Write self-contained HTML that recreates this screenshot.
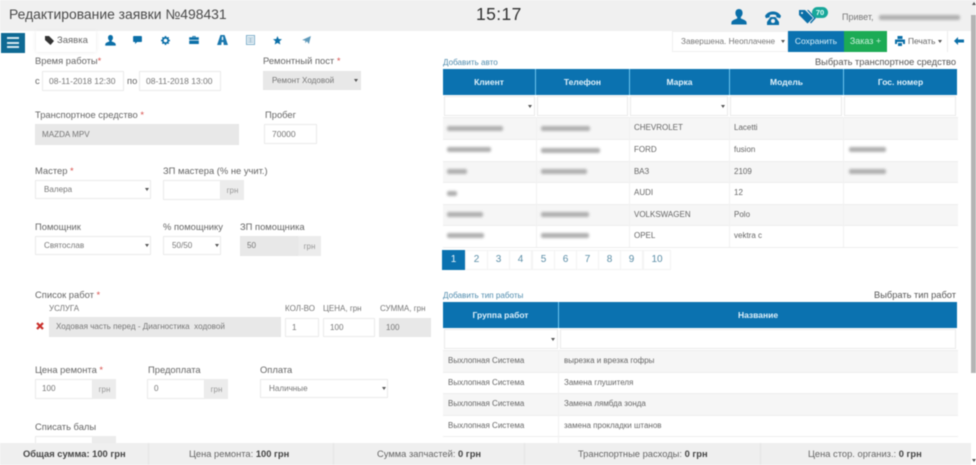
<!DOCTYPE html>
<html lang="ru"><head><meta charset="utf-8"><title>Заявка</title>
<style>
html,body{margin:0;padding:0;background:#fff;width:976px;height:465px;overflow:hidden}
#p{position:relative;width:976px;height:465px;overflow:hidden;font-family:"Liberation Sans",sans-serif;color:#666;filter:blur(.5px);background:#fff}
#p div,#p span.a,#p svg{position:absolute;box-sizing:border-box}
.l{font-size:9.4px;line-height:12px;white-space:nowrap;color:#666}
.l b{color:#d9534f;font-weight:normal}
.s{font-size:8px;line-height:10px;white-space:nowrap;color:#777}
.i{background:#fff;border:1px solid #eaeaea;font-size:8.1px;color:#777;padding-left:6px;white-space:nowrap;overflow:hidden}
.g{background:#e8e8e8;border-color:#e6e6e6}
.ad{background:#ececec;border:1px solid #ececec;font-size:8px;color:#999;text-align:center}
.ar{width:0;height:0;border-left:2px solid transparent;border-right:2px solid transparent;border-top:3px solid #555}
.th{background:#0b72b0;color:#dff0fa;font-weight:bold;font-size:8.5px;text-align:center;border-right:1px solid #6cc4ee}
.c{font-size:8px;color:#666;white-space:nowrap;line-height:22px;height:22px}
.z{background:#f6f6f6;left:443px;width:515px;height:22px}
.w{left:443px;width:515px;height:1px;background:#eeeeee}
.v{width:1px;background:#f1f1f1}
.r{background:#b0b0b0;height:5px;filter:blur(1.4px);border-radius:2px}
.f{top:443px;height:22px;line-height:22px;font-size:9.35px;color:#666;white-space:nowrap}
.f b{color:#444}
.pg{top:250px;width:23px;height:20px;line-height:18px;text-align:center;font-size:10px;color:#5d8fa8;border:1px solid #f3f3f3;background:#fff}
</style></head><body><div id="p">

<div style="left:0;top:0;width:976px;height:31px;background:#f0f0f0"></div>
<div style="left:9px;top:4px;font-size:13.9px;line-height:20px;color:#4a4a4a;white-space:nowrap">Редактирование заявки №498431</div>
<div style="left:476px;top:3px;font-size:17.5px;line-height:22px;color:#333;letter-spacing:.4px">15:17</div>

<svg style="left:731px;top:9px" width="16" height="16" viewBox="0 0 16 16"><path fill="#0b6fa8" d="M8 0c2.300 0 3.600 1.800 3.600 4 0 1.700-.8 3.200-1.800 4v1.500c2 .7 5.200 1.800 5.700 3.500l.2 2.500H.3l.2-2.500c.5-1.700 3.700-2.800 5.700-3.500V8c-1-.8-1.800-2.300-1.800-4C4.400 1.800 5.700 0 8 0z"/></svg>
<svg style="left:765px;top:11px" width="16" height="14" viewBox="0 0 16 14"><path fill="#0b6fa8" d="M0 5C2 1.500 5 .5 8 .5s6 1 8 4.500l-1 2.300-3.500-1-.5-2.300c-1.800-.6-4.200-.6-6 0l-.5 2.300-3.500 1zM5.500 6h5L14 11v3H2v-3zM8 8a2 2 0 100 4 2 2 0 000-4z"/></svg>
<svg style="left:799px;top:9px" width="18" height="16" viewBox="0 0 18 16"><path fill="#0b6fa8" d="M0 1h6l8 8-5.500 5.500L0 6zM3 3a1 1 0 100 2 1 1 0 000-2z"/><path fill="#0b6fa8" d="M8 1h1.500l7.500 8-5 5.500-1-1 4-4.500z"/></svg>
<div style="left:812px;top:7px;width:16px;height:11px;border-radius:6px;background:#17a79a;color:#e6fff8;font-size:7.500px;line-height:11px;text-align:center;font-weight:bold">70</div>
<div style="left:842px;top:11px;font-size:9px;line-height:12px;color:#777">Привет,</div>
<div class="r" style="left:879px;top:15px;width:81px;height:5px"></div>

<div style="left:971px;top:15px;width:5px;height:358px;background:#b4b4b4"></div>
<div style="left:972px;top:2px;width:0;height:0;border-left:2px solid transparent;border-right:2px solid transparent;border-bottom:3px solid #555"></div>
<div style="left:972px;top:459px;width:0;height:0;border-left:2px solid transparent;border-right:2px solid transparent;border-top:3px solid #555"></div>

<div style="left:1px;top:33px;width:24px;height:20px;background:#0f6a94"></div>
<div style="left:7px;top:37px;width:12px;height:2px;background:#d5e8f0"></div>
<div style="left:7px;top:41.500px;width:12px;height:2px;background:#d5e8f0"></div>
<div style="left:7px;top:46px;width:12px;height:2px;background:#d5e8f0"></div>

<div style="left:36px;top:31px;width:60px;height:21px;background:#fff;box-shadow:0 0 4px #e8e8e8"></div>
<svg style="left:45px;top:36px" width="9" height="9" viewBox="0 0 9 9"><path fill="#333" d="M0 0h4l5 5-3.500 4L0 4z"/></svg>
<div style="left:57px;top:35px;font-size:9.500px;line-height:12px;color:#666">Заявка</div>
<svg style="left:105px;top:35px" width="11" height="11" viewBox="0 0 16 16"><path fill="#0b6fa8" d="M8 0c2.300 0 3.600 1.800 3.600 4 0 1.700-.8 3.200-1.800 4v1.500c2 .7 5.200 1.800 5.700 3.500l.2 2.500H.3l.2-2.500c.5-1.700 3.700-2.800 5.700-3.500V8c-1-.8-1.800-2.300-1.800-4C4.400 1.800 5.700 0 8 0z"/></svg>
<svg style="left:133px;top:36px" width="9" height="8" viewBox="0 0 11 10"><path fill="#0b6fa8" d="M1 0h9a1 1 0 011 1v5.500a1 1 0 01-1 1H5L2.500 10V7.500H1a1 1 0 01-1-1V1a1 1 0 011-1z"/></svg>
<svg style="left:161px;top:36px" width="9" height="9" viewBox="0 0 12 12"><circle cx="6" cy="6" r="3.600" fill="none" stroke="#0b6fa8" stroke-width="2.400"/><path stroke="#0b6fa8" stroke-width="2" d="M6 0v2M6 10v2M0 6h2M10 6h2M1.800 1.800l1.400 1.400M8.800 8.800l1.400 1.400M10.200 1.800L8.800 3.200M3.200 8.800l-1.400 1.400"/></svg>
<svg style="left:189px;top:36px" width="10" height="8" viewBox="0 0 12 10"><path fill="#0b6fa8" d="M4 0h4v1.500h4v3.300H0V1.500h4zM5 1v.5h2V1zM0 5.800h12V10H0z"/></svg>
<svg style="left:217px;top:35px" width="11" height="10" viewBox="0 0 13 12"><path fill="#1a78ae" d="M4 0h5l4 12H8l-.4-3.500H5.400L5 12H0zM5.800 2l-.2 4h1.800l-.2-4z"/></svg>
<svg style="left:246px;top:35px" width="9" height="10" viewBox="0 0 11 12"><rect x=".5" y=".5" width="10" height="11" fill="#eef5f9" stroke="#6fa5c4"/><path stroke="#9abcd0" d="M2 3.500h7M2 6h7M2 8.500h7M5.500 3.500v6"/></svg>
<svg style="left:273px;top:36px" width="9" height="9" viewBox="0 0 10 10"><path fill="#0b6fa8" d="M5 0l1.400 3.300 3.600.3-2.700 2.300.8 3.600L5 7.600 1.900 9.500l.8-3.600L0 3.600l3.600-.3z"/></svg>
<svg style="left:302px;top:36px" width="9" height="8" viewBox="0 0 11 10"><path fill="#5f9abb" d="M11 0L8.500 10 6 6.500 4 9V6L0 5z"/></svg>

<div class="i" style="left:672px;top:31px;width:116px;height:21px;line-height:20px;border-color:#f0f0f0;padding-left:8px;font-size:8.200px">Завершена. Неоплачене</div>
<div style="left:775px;top:33px;width:11px;height:17px;background:#fff"></div>
<div class="ar" style="left:781px;top:40px"></div>
<div style="left:788px;top:31px;width:56px;height:21px;background:#0b72b0;color:#d8eefa;font-size:8.500px;line-height:21px;text-align:center">Сохранить</div>
<div style="left:844px;top:31px;width:43px;height:21px;background:#1cab55;color:#c8f0d8;font-size:9px;line-height:21px;text-align:center">Заказ +</div>
<div style="left:887px;top:31px;width:61px;height:21px;background:#fff;border-right:1px solid #ececec"></div>
<svg style="left:895px;top:36px" width="10" height="10" viewBox="0 0 10 10"><path fill="#0b6fa8" d="M2.500 0h5v3h-5zM0 3.500h10V8H8V6H2v2H0zM3 7h4v3H3z"/></svg>
<div style="left:908px;top:35px;font-size:8.400px;line-height:12px;color:#666;white-space:nowrap">Печать</div>
<div class="ar" style="left:938px;top:40px"></div>
<svg style="left:954px;top:37px" width="10" height="8" viewBox="0 0 10 8"><path fill="#0b6fa8" d="M0 4l4-4v2.500h6v3H4V8z"/></svg>

<div class="l" style="left:35px;top:55px">Время работы<b>*</b></div>
<div class="l" style="left:35px;top:75px">с</div>
<div class="i" style="left:42px;top:71px;width:82px;height:20px;line-height:18px;font-size:8.500px">08-11-2018 12:30</div>
<div class="l" style="left:127px;top:75px">по</div>
<div class="i" style="left:139px;top:71px;width:82px;height:20px;line-height:18px;font-size:8.500px">08-11-2018 13:00</div>
<div class="l" style="left:263px;top:55px">Ремонтный пост <b>*</b></div>
<div class="i g" style="left:263px;top:71px;width:98px;height:19px;line-height:17px;padding-left:8px">Ремонт Ходовой</div>
<div class="ar" style="left:354px;top:79px"></div>

<div class="l" style="left:35px;top:109px">Транспортное средство <b>*</b></div>
<div class="i g" style="left:35px;top:124px;width:204px;height:21px;line-height:19px">MAZDA MPV</div>
<div class="l" style="left:265px;top:109px">Пробег</div>
<div class="i" style="left:264px;top:124px;width:53px;height:20px;line-height:18px;padding-left:7px;font-size:8.500px">70000</div>

<div class="l" style="left:35px;top:165px">Мастер <b>*</b></div>
<div class="i" style="left:35px;top:180px;width:116px;height:19px;line-height:17px;padding-left:8px">Валера</div>
<div class="ar" style="left:145px;top:188px"></div>
<div class="l" style="left:163px;top:165px">ЗП мастера (% не учит.)</div>
<div class="i" style="left:163px;top:180px;width:58px;height:20px"></div>
<div class="ad" style="left:221px;top:180px;width:23px;height:20px;line-height:19px">грн</div>

<div class="l" style="left:35px;top:221px">Помощник</div>
<div class="i" style="left:35px;top:236px;width:116px;height:19px;line-height:17px;padding-left:8px">Святослав</div>
<div class="ar" style="left:145px;top:244px"></div>
<div class="l" style="left:163px;top:221px">% помощнику</div>
<div class="i" style="left:163px;top:236px;width:58px;height:19px;line-height:17px;padding-left:8px">50/50</div>
<div class="ar" style="left:215px;top:244px"></div>
<div class="l" style="left:240px;top:221px">ЗП помощника</div>
<div class="i g" style="left:240px;top:236px;width:58px;height:20px;line-height:18px">50</div>
<div class="ad" style="left:298px;top:236px;width:23px;height:20px;line-height:19px">грн</div>

<div class="l" style="left:35px;top:289px">Список работ <b>*</b></div>
<div class="s" style="left:49px;top:304px">УСЛУГА</div>
<div class="s" style="left:285px;top:304px">КОЛ-ВО</div>
<div class="s" style="left:323px;top:304px">ЦЕНА, грн</div>
<div class="s" style="left:380px;top:304px">СУММА, грн</div>
<svg style="left:36px;top:322px" width="8" height="8" viewBox="0 0 8 8"><path stroke="#c9302c" stroke-width="2.200" d="M1 1l6 6M7 1L1 7"/></svg>
<div class="i g" style="left:49px;top:317px;width:232px;height:20px;line-height:18px">Ходовая часть перед - Диагностика&nbsp; ходовой</div>
<div class="i" style="left:285px;top:318px;width:34px;height:19px;line-height:17px">1</div>
<div class="i" style="left:323px;top:318px;width:52px;height:19px;line-height:17px">100</div>
<div class="i g" style="left:379px;top:318px;width:52px;height:19px;line-height:17px">100</div>

<div class="l" style="left:35px;top:364px">Цена ремонта <b>*</b></div>
<div class="i" style="left:35px;top:379px;width:58px;height:20px;line-height:18px">100</div>
<div class="ad" style="left:93px;top:379px;width:23px;height:20px;line-height:19px">грн</div>
<div class="l" style="left:148px;top:364px">Предоплата</div>
<div class="i" style="left:147px;top:379px;width:58px;height:20px;line-height:18px">0</div>
<div class="ad" style="left:205px;top:379px;width:23px;height:20px;line-height:19px">грн</div>
<div class="l" style="left:260px;top:364px">Оплата</div>
<div class="i" style="left:260px;top:379px;width:128px;height:19px;line-height:17px;padding-left:8px">Наличные</div>
<div class="ar" style="left:382px;top:387px"></div>
<div class="l" style="left:35px;top:421px">Списать балы</div>
<div class="i" style="left:35px;top:436px;width:58px;height:12px"></div>
<div class="ad" style="left:93px;top:436px;width:23px;height:12px"></div>

<!-- table 1 -->
<div style="left:443px;top:57px;font-size:8.100px;line-height:11px;color:#4f8bad;white-space:nowrap">Добавить авто</div>
<div style="right:20px;top:56px;font-size:9.300px;line-height:12px;color:#555;white-space:nowrap">Выбрать транспортное средство</div>
<div class="th" style="left:443px;top:69px;width:93px;height:26px;line-height:26px">Клиент</div>
<div class="th" style="left:536px;top:69px;width:94px;height:26px;line-height:26px">Телефон</div>
<div class="th" style="left:630px;top:69px;width:100px;height:26px;line-height:26px">Марка</div>
<div class="th" style="left:730px;top:69px;width:114px;height:26px;line-height:26px">Модель</div>
<div class="th" style="left:844px;top:69px;width:113px;height:26px;line-height:26px;border:0">Гос. номер</div>
<div class="i" style="left:444px;top:96px;width:91px;height:20px"></div><div class="ar" style="left:528px;top:105px"></div>
<div class="i" style="left:537px;top:96px;width:91px;height:20px"></div>
<div class="i" style="left:630px;top:96px;width:98px;height:20px"></div><div class="ar" style="left:721px;top:105px"></div>
<div class="i" style="left:730px;top:96px;width:112px;height:20px"></div>
<div class="i" style="left:844px;top:96px;width:112px;height:20px"></div>

<div class="z" style="top:117px"></div><div class="z" style="top:161px;height:21px"></div><div class="z" style="top:204px;height:21px"></div>
<div class="w" style="top:117px"></div><div class="w" style="top:139px"></div><div class="w" style="top:161px"></div><div class="w" style="top:182px"></div><div class="w" style="top:204px"></div><div class="w" style="top:225px"></div><div class="w" style="top:247px"></div>
<div class="v" style="left:536px;top:117px;height:130px"></div><div class="v" style="left:629px;top:117px;height:130px"></div><div class="v" style="left:729px;top:117px;height:130px"></div><div class="v" style="left:843px;top:117px;height:130px"></div>

<div class="c" style="left:634px;top:117px">CHEVROLET</div><div class="c" style="left:734px;top:117px">Lacetti</div>
<div class="c" style="left:634px;top:139px">FORD</div><div class="c" style="left:734px;top:139px">fusion</div>
<div class="c" style="left:634px;top:161px">ВАЗ</div><div class="c" style="left:734px;top:161px">2109</div>
<div class="c" style="left:634px;top:182px">AUDI</div><div class="c" style="left:734px;top:182px">12</div>
<div class="c" style="left:634px;top:204px">VOLKSWAGEN</div><div class="c" style="left:734px;top:204px">Polo</div>
<div class="c" style="left:634px;top:225px">OPEL</div><div class="c" style="left:734px;top:225px">vektra c</div>

<div class="r" style="left:447px;top:126px;width:56px"></div><div class="r" style="left:541px;top:126px;width:49px"></div>
<div class="r" style="left:447px;top:147px;width:44px"></div><div class="r" style="left:541px;top:148px;width:59px"></div><div class="r" style="left:849px;top:147px;width:37px"></div>
<div class="r" style="left:447px;top:169px;width:20px"></div><div class="r" style="left:541px;top:169px;width:46px"></div><div class="r" style="left:849px;top:169px;width:37px"></div>
<div class="r" style="left:447px;top:191px;width:10px"></div>
<div class="r" style="left:447px;top:212px;width:36px"></div><div class="r" style="left:541px;top:212px;width:48px"></div>
<div class="r" style="left:447px;top:233px;width:37px"></div><div class="r" style="left:541px;top:233px;width:48px"></div>

<div class="pg" style="left:442px;background:#0b72b0;color:#e8f5fc;border-color:#0b72b0">1</div>
<div class="pg" style="left:465px">2</div><div class="pg" style="left:487px">3</div><div class="pg" style="left:509px">4</div><div class="pg" style="left:532px">5</div><div class="pg" style="left:554px">6</div><div class="pg" style="left:576px">7</div><div class="pg" style="left:598px">8</div><div class="pg" style="left:620px">9</div><div class="pg" style="left:643px;width:28px">10</div>

<!-- table 2 -->
<div style="left:443px;top:290px;font-size:8.100px;line-height:11px;color:#4f8bad;white-space:nowrap">Добавить тип работы</div>
<div style="right:20px;top:289px;font-size:9.300px;line-height:12px;color:#555;white-space:nowrap">Выбрать тип работ</div>
<div class="th" style="left:443px;top:302px;width:116px;height:26px;line-height:26px">Группа работ</div>
<div class="th" style="left:559px;top:302px;width:398px;height:26px;line-height:26px;border:0">Название</div>
<div class="i" style="left:444px;top:329px;width:114px;height:20px"></div><div class="ar" style="left:551px;top:338px"></div>
<div class="i" style="left:560px;top:329px;width:396px;height:20px"></div>
<div class="z" style="top:350px"></div><div class="z" style="top:393px"></div>
<div class="w" style="top:350px"></div><div class="w" style="top:372px"></div><div class="w" style="top:393px"></div><div class="w" style="top:415px"></div><div class="w" style="top:436px"></div>
<div class="v" style="left:558px;top:350px;height:93px"></div>
<div class="c" style="left:448px;top:350px">Выхлопная Система</div><div class="c" style="left:564px;top:350px">вырезка и врезка гофры</div>
<div class="c" style="left:448px;top:372px">Выхлопная Система</div><div class="c" style="left:564px;top:372px">Замена глушителя</div>
<div class="c" style="left:448px;top:393px">Выхлопная Система</div><div class="c" style="left:564px;top:393px">Замена лямбда зонда</div>
<div class="c" style="left:448px;top:415px">Выхлопная Система</div><div class="c" style="left:564px;top:415px">замена прокладки штанов</div>

<!-- footer -->
<div style="left:0;top:443px;width:971px;height:22px;background:#efefef"></div>
<div class="v" style="left:148px;top:443px;height:22px;background:#e4e4e4"></div>
<div class="v" style="left:333px;top:443px;height:22px;background:#e4e4e4"></div>
<div class="v" style="left:524px;top:443px;height:22px;background:#e4e4e4"></div>
<div class="v" style="left:760px;top:443px;height:22px;background:#e4e4e4"></div>
<div class="f" style="left:23px"><b>Общая сумма: 100 грн</b></div>
<div class="f" style="left:189px">Цена ремонта: <b>100 грн</b></div>
<div class="f" style="left:377px">Сумма запчастей: <b>0 грн</b></div>
<div class="f" style="left:578px">Транспортные расходы: <b>0 грн</b></div>
<div class="f" style="left:808px">Цена стор. организ.: <b>0 грн</b></div>
</div></body></html>
